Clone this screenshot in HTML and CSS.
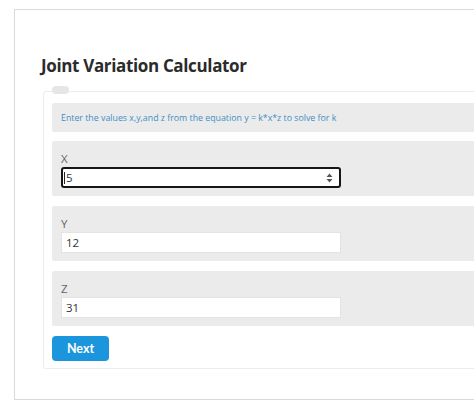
FILE: index.html
```html
<!DOCTYPE html>
<html>
<head>
<meta charset="utf-8">
<link rel="stylesheet" href="styles.css">
</head>
<body>
<div class="card">
  <h1 class="title">Joint Variation Calculator</h1>
  <div class="panel">
    <span class="legend"></span>
    <div class="info">Enter the values x,y,and z from the equation y = k*x*z to solve for k</div>
    <div class="group">
      <label class="lbl">X</label>
      <div class="field focused">
        <span class="caret"></span><span class="val">5</span>
        <svg class="spin" width="7" height="10" viewBox="0 0 7 10"><path d="M3.5 0.5 L6.5 4 H0.5 Z M3.5 9.5 L6.5 6 H0.5 Z" fill="#555"/></svg>
      </div>
    </div>
    <div class="group">
      <label class="lbl">Y</label>
      <div class="field"><span class="val">12</span></div>
    </div>
    <div class="group">
      <label class="lbl">Z</label>
      <div class="field"><span class="val">31</span></div>
    </div>
    <button class="btn">Next</button>
  </div>
</div>
</body>
</html>
```

FILE: styles.css
```css
html, body {
  margin: 0;
  padding: 0;
  background: #fff;
}
body {
  font-family: "Open Sans", "Liberation Sans", sans-serif;
  overflow: hidden;
}
.card {
  margin: 9px 0 0 14px;
  width: 540px;
  height: 391px;
  border: 1px solid #d9d9d9;
  box-sizing: border-box;
  padding: 43px 0 0 28px;
}
.title {
  margin: 0 0 12px -2px;
  font-size: 17px;
  letter-spacing: -0.35px;
  line-height: 26px;
  font-weight: 700;
  color: #2b2b2b;
}
.panel {
  position: relative;
  border: 1px solid #ececec;
  border-radius: 3px;
  padding: 11px 0 7px 8px;
  display: flex;
  flex-direction: column;
  gap: 9px;
}
.legend {
  position: absolute;
  left: 8px;
  top: -6px;
  width: 17px;
  height: 8px;
  border-radius: 4px;
  background: #e6e6e6;
}
.info {
  background: #ebebeb;
  height: 29px;
  display: flex;
  align-items: center;
  padding-left: 9px;
  font-size: 8.8px;
  color: #3f8fc6;
  border-radius: 2px;
}
.group {
  background: #ebebeb;
  height: 55px;
  box-sizing: border-box;
  padding: 10px 0 0 9px;
  display: flex;
  flex-direction: column;
  border-radius: 2px;
}
.group + .group { margin-top: 1px; }
.lbl {
  font-size: 11.5px;
  line-height: 15px;
  color: #666;
  height: 16px;
}
.field {
  position: relative;
  width: 280px;
  height: 21px;
  box-sizing: border-box;
  background: #fff;
  border: 1px solid #e3e3e3;
  display: flex;
  align-items: center;
  padding-left: 4px;
  font-size: 11.5px;
  color: #333;
}
.field.focused {
  border: 2px solid #161616;
  border-radius: 3px;
  padding-left: 1px;
}
.caret {
  width: 1px;
  height: 12px;
  background: #222;
  margin-right: 1px;
}
.spin {
  position: absolute;
  right: 6px;
  top: 4px;
}
.btn {
  margin-top: 1px;
  align-self: flex-start;
  width: 57px;
  height: 25px;
  border: none;
  border-radius: 4px;
  background: #1b95db;
  color: #fff;
  font-family: Lato, "Liberation Sans", sans-serif;
  font-weight: 700;
  font-size: 12.5px;
  padding: 0;
}
```
